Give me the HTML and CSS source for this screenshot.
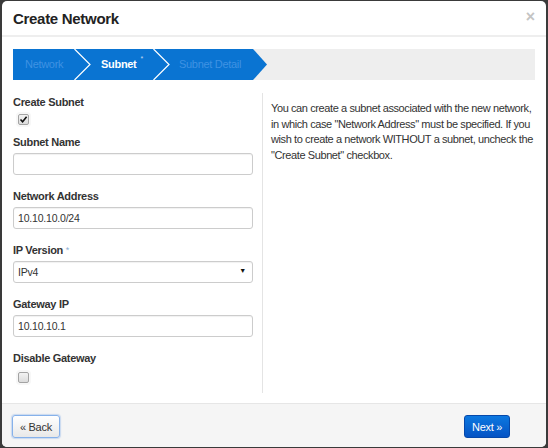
FILE: index.html
```html
<!DOCTYPE html>
<html lang="en">
<head>
<meta charset="utf-8">
<title>Create Network</title>
<link rel="stylesheet" href="styles.css">
</head>
<body>
<div class="modal">
  <div class="modal-header">
    <h3 class="title">Create Network</h3>
    <span class="close">×</span>
  </div>
  <div class="modal-body">
    <div class="wizard">
      <div class="steps">
        <span class="step muted s1">Network</span>
        <svg class="sep" width="17" height="31" viewBox="0 0 17 31"><polyline points="0.5,0 16,15.5 0.5,31" fill="none" stroke="#fff" stroke-width="1.2"/></svg>
        <span class="step active s2">Subnet<sup>*</sup></span>
        <svg class="sep" width="17" height="31" viewBox="0 0 17 31"><polyline points="0.5,0 16,15.5 0.5,31" fill="none" stroke="#fff" stroke-width="1.2"/></svg>
        <span class="step muted s3">Subnet Detail</span>
      </div>
      <svg class="tip" width="14" height="31" viewBox="0 0 14 31"><polygon points="0,0 14,15.5 0,31" fill="#0a74d2"/></svg>
    </div>
    <div class="columns">
      <div class="form">
        <label class="label">Create Subnet</label>
        <span class="checkbox"><svg width="9" height="9" viewBox="0 0 9 9"><path d="M1.5 4.5 L3.6 6.8 L7.6 1.8" fill="none" stroke="#111" stroke-width="1.6"/></svg></span>
        <label class="label">Subnet Name</label>
        <input class="field" type="text" value="">
        <label class="label">Network Address</label>
        <input class="field" type="text" value="10.10.10.0/24">
        <label class="label">IP Version <span class="req">*</span></label>
        <div class="select-wrap">
          <select class="field select"><option>IPv4</option></select>
        </div>
        <label class="label">Gateway IP</label>
        <input class="field" type="text" value="10.10.10.1">
        <label class="label">Disable Gateway</label>
        <span class="checkbox last"></span>
      </div>
      <div class="help">
        <p>You can create a subnet associated with the new network, in which case "Network Address" must be specified. If you wish to create a network WITHOUT a subnet, uncheck the "Create Subnet" checkbox.</p>
      </div>
    </div>
  </div>
  <div class="modal-footer">
    <button class="btn">« Back</button>
    <button class="btn btn-primary">Next »</button>
  </div>
</div>
</body>
</html>
```
FILE: styles.css
```css
html, body {
  margin: 0;
  padding: 0;
  height: 448px;
  background: #3a3a3a;
  overflow: hidden;
}
body {
  font-family: "Liberation Sans", Arial, sans-serif;
  font-size: 11px;
  letter-spacing: -0.3px;
  color: #333;
}
.modal {
  margin: 1px 2px 0 2px;
  height: 446px;
  background: #fff;
  border-radius: 5px;
  display: flex;
  flex-direction: column;
  overflow: hidden;
}
.modal-header {
  height: 34px;
  padding: 0 11px;
  display: flex;
  align-items: center;
  justify-content: space-between;
  border-bottom: 2px solid #eeeeee;
}
.title {
  margin: 0;
  font-size: 15px;
  font-weight: bold;
  color: #222;
}
.close {
  font-size: 16px;
  font-weight: bold;
  color: #c4c4c4;
  letter-spacing: 0;
  margin-top: -3px;
}
.modal-body {
  padding: 12px 5px 0 11px;
}
.wizard {
  display: flex;
  height: 31px;
  background: #eeeeee;
  margin-right: 6px;
}
.steps {
  display: flex;
  background: #0a74d2;
  height: 31px;
}
.step {
  box-sizing: border-box;
  line-height: 31px;
  white-space: nowrap;
}
.step.muted { color: #3f92e2; }
.step.active { color: #fff; font-weight: bold; }
.step sup {
  font-size: 7px;
  font-weight: normal;
  color: #c9d9ee;
  vertical-align: top;
  line-height: 20px;
  margin-left: 4px;
}
.s1 { width: 61px; padding-left: 12px; }
.s2 { width: 62px; padding-left: 10px; }
.s3 { width: 83px; padding-left: 9px; }
.sep, .tip { display: block; flex: none; }

.columns {
  display: flex;
  margin-top: 13px;
}
.form {
  width: 240px;
  flex: none;
  display: flex;
  flex-direction: column;
  align-items: flex-start;
  padding-bottom: 10px;
}
.label {
  display: block;
  font-weight: bold;
  line-height: 18px;
  margin-bottom: 2px;
}
.req {
  color: #8fb0d3;
  font-weight: normal;
  font-size: 9px;
  vertical-align: top;
}
.checkbox {
  box-sizing: border-box;
  width: 11px;
  height: 11px;
  margin: 1px 0 8px 5px;
  border: 1px solid #a3a3a3;
  border-radius: 2px;
  background: linear-gradient(#f2f2f2, #dcdcdc);
  box-shadow: 0 0 0 2px #f7f7f7;
  display: flex;
  align-items: center;
  justify-content: center;
}
.checkbox.last { margin: 3px 0 0 5px; }
.field {
  box-sizing: border-box;
  width: 240px;
  height: 22px;
  margin: 0 0 12px 0;
  padding: 0 4px;
  border: 1px solid #cccccc;
  border-radius: 3px;
  box-shadow: inset 0 1px 1px rgba(0, 0, 0, 0.06);
  font-family: "Liberation Sans", Arial, sans-serif;
  font-size: 10.5px;
  letter-spacing: -0.2px;
  color: #333;
  background: #fff;
  outline: none;
}
.select-wrap {
  position: relative;
  width: 240px;
}
.select {
  appearance: none;
  -webkit-appearance: none;
  display: block;
}
.select-wrap::after {
  content: "▼";
  position: absolute;
  right: 7px;
  top: 6px;
  font-size: 7px;
  color: #111;
}
.help {
  margin-left: 9px;
  border-left: 1px solid #e4e4e4;
  padding-left: 8px;
  width: 270px;
  flex: none;
}
.help p {
  margin: 8px 0 0 0;
  line-height: 15.5px;
  letter-spacing: -0.4px;
}
.modal-footer {
  flex: 1;
  margin-top: 10px;
  background: #f5f5f5;
  border-top: 1px solid #e6e6e6;
  display: flex;
  justify-content: space-between;
  align-items: flex-start;
  padding: 11px 36px 0 10px;
}
.btn {
  height: 23px;
  padding: 0 7px;
  font-family: "Liberation Sans", Arial, sans-serif;
  font-size: 11px;
  letter-spacing: -0.3px;
  color: #333;
  border: 1px solid #86b1ea;
  border-radius: 3px;
  background: linear-gradient(#ffffff, #e8e8e8);
  box-shadow: 0 0 1px 1px rgba(120, 165, 230, 0.35);
}
.btn-primary {
  color: #fff;
  border: 1px solid #0548aa;
  background: linear-gradient(#0c78e0, #0553c4);
  box-shadow: none;
}
```
